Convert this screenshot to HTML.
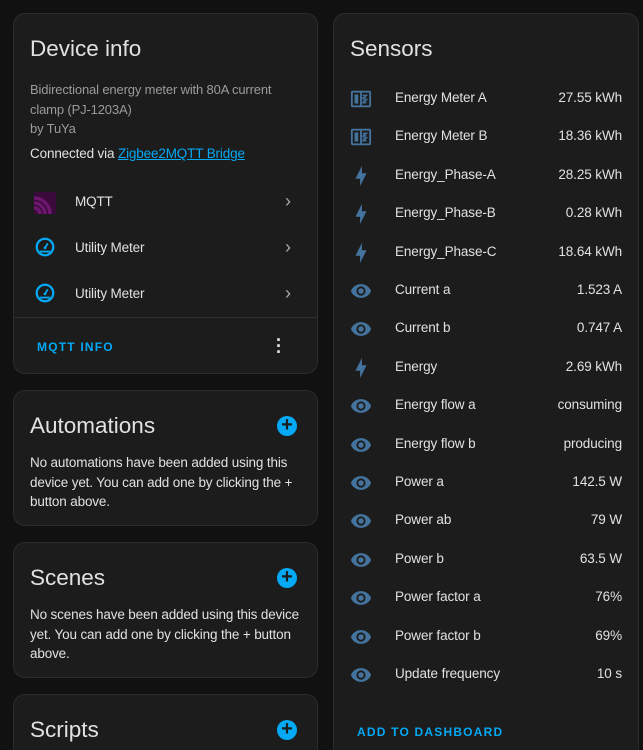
<!DOCTYPE html><html style="height:750px;overflow:hidden"><head><style>
body{margin:0;background:#111;font-family:"Liberation Sans",sans-serif;color:#e1e1e1;width:643px;height:750px;overflow:hidden;position:relative}
.card{position:absolute;background:#1c1c1c;border:1px solid #2c2c2c;border-radius:12px;box-sizing:border-box}
h2{font-weight:400;font-size:22.5px;margin:0;position:absolute;left:16px;color:#e1e1e1}
.t{position:absolute;font-size:13.5px;letter-spacing:-0.15px}
.row{position:absolute;left:0;right:0;height:38px;font-size:13.5px;letter-spacing:-0.1px}
.row .ic{position:absolute;left:16px;top:6px;width:22px;height:22px}
.row .n{position:absolute;left:61px;top:8px}
.row .v{position:absolute;right:16px;top:8px}
.plus{position:absolute;right:20px;width:20px;height:20px;border-radius:50%;background:#03a9f4;color:#1c1c1c;font-size:20px;line-height:19px;text-align:center;font-weight:bold}
.btn{position:absolute;color:#03a9f4;font-size:12px;font-weight:bold;letter-spacing:1.2px}
.chev{position:absolute;right:26px;color:#aaa;font-size:18px}
</style></head><body>
<div class="card" style="left:13px;top:13px;width:305px;height:361px">
<h2 style="top:22px">Device info</h2>
<div class="t" style="left:16px;top:66px;color:#9b9b9b;line-height:19.5px;font-size:13px">Bidirectional energy meter with 80A current<br>clamp (PJ-1203A)<br>by TuYa</div>
<div class="t" style="left:16px;top:132px">Connected via <span style="color:#03a9f4;text-decoration:underline">Zigbee2MQTT Bridge</span></div>
<svg style="position:absolute;left:20px;top:178px" width="22" height="22" viewBox="0 0 22 22"><rect width="22" height="22" fill="#3a0a3a"/><path d="M0 6a16 16 0 0 1 16 16M0 11a11 11 0 0 1 11 11M0 16a6 6 0 0 1 6 6" stroke="#6e166e" stroke-width="3.5" fill="none"/></svg>
<div class="t" style="left:61px;top:180px">MQTT</div><div class="chev" style="top:177px">›</div>
<svg style="position:absolute;left:20px;top:222px" width="22" height="22" viewBox="0 0 24 24"><circle cx="12" cy="12" r="9" fill="none" stroke="#03a9f4" stroke-width="2.5"/><path d="M6 16h12l-1 2H7z" fill="#03a9f4"/><path d="M12 13l3-5" stroke="#03a9f4" stroke-width="2"/><circle cx="12" cy="13" r="1.5" fill="#03a9f4"/></svg>
<div class="t" style="left:61px;top:226px">Utility Meter</div><div class="chev" style="top:223px">›</div>
<svg style="position:absolute;left:20px;top:268px" width="22" height="22" viewBox="0 0 24 24"><circle cx="12" cy="12" r="9" fill="none" stroke="#03a9f4" stroke-width="2.5"/><path d="M6 16h12l-1 2H7z" fill="#03a9f4"/><path d="M12 13l3-5" stroke="#03a9f4" stroke-width="2"/><circle cx="12" cy="13" r="1.5" fill="#03a9f4"/></svg>
<div class="t" style="left:61px;top:272px">Utility Meter</div><div class="chev" style="top:269px">›</div>
<div style="position:absolute;left:0;right:0;top:303px;border-top:1px solid #2f2f2f"></div>
<div class="btn" style="left:23px;top:326px">MQTT INFO</div>
<div style="position:absolute;left:262px;top:323px;color:#e1e1e1;font-size:18px;line-height:6px;font-weight:bold">·<br>·<br>·</div>
</div>
<div class="card" style="left:13px;top:390px;width:305px;height:136px">
<h2 style="top:22px">Automations</h2><div class="plus" style="top:25px">+</div>
<div class="t" style="left:16px;top:62px;line-height:19.5px">No automations have been added using this<br>device yet. You can add one by clicking the +<br>button above.</div></div>
<div class="card" style="left:13px;top:542px;width:305px;height:136px">
<h2 style="top:22px">Scenes</h2><div class="plus" style="top:25px">+</div>
<div class="t" style="left:16px;top:62px;line-height:19.5px">No scenes have been added using this device<br>yet. You can add one by clicking the + button<br>above.</div></div>
<div class="card" style="left:13px;top:694px;width:305px;height:80px">
<h2 style="top:22px">Scripts</h2><div class="plus" style="top:25px">+</div></div>
<div class="card" style="left:333px;top:13px;width:306px;height:760px">
<h2 style="top:22px">Sensors</h2>
<div id="rows"></div>
<div class="btn" style="left:23px;top:711px">ADD TO DASHBOARD</div>
</div>
<script>
var m='<svg class="ic" viewBox="0 0 24 24"><rect x="1" y="3" width="22" height="18" rx="2" fill="#44739e"/><rect x="3" y="5" width="18" height="14" fill="#1c1c1c"/><path d="M5 7h4v10H5z" fill="#44739e"/><path d="M12 5v14" stroke="#44739e" stroke-width="2"/><path d="M14 8h4l-4 3h4M14 13h4l-4 3h4" stroke="#44739e" stroke-width="1.5" fill="none"/></svg>';
var b='<svg class="ic" viewBox="0 0 24 24"><path d="M11 15H6l7-14v8h5l-7 14z" fill="#44739e"/></svg>';
var e='<svg class="ic" viewBox="0 0 24 24"><path d="M12 4.5C7 4.5 2.7 7.6 1 12c1.7 4.4 6 7.5 11 7.5s9.3-3.1 11-7.5c-1.7-4.4-6-7.5-11-7.5zM12 17a5 5 0 1 1 0-10 5 5 0 0 1 0 10zm0-8a3 3 0 1 0 0 6 3 3 0 0 0 0-6z" fill="#44739e"/></svg>';
var d=[[m,'Energy Meter A','27.55 kWh'],[m,'Energy Meter B','18.36 kWh'],[b,'Energy_Phase-A','28.25 kWh'],[b,'Energy_Phase-B','0.28 kWh'],[b,'Energy_Phase-C','18.64 kWh'],[e,'Current a','1.523 A'],[e,'Current b','0.747 A'],[b,'Energy','2.69 kWh'],[e,'Energy flow a','consuming'],[e,'Energy flow b','producing'],[e,'Power a','142.5 W'],[e,'Power ab','79 W'],[e,'Power b','63.5 W'],[e,'Power factor a','76%'],[e,'Power factor b','69%'],[e,'Update frequency','10 s']];
var h='';d.forEach(function(r,i){h+='<div class="row" style="top:'+(68+i*38.4)+'px">'+r[0]+'<span class="n">'+r[1]+'</span><span class="v">'+r[2]+'</span></div>'});
document.getElementById('rows').innerHTML=h;
</script>
</body></html>
